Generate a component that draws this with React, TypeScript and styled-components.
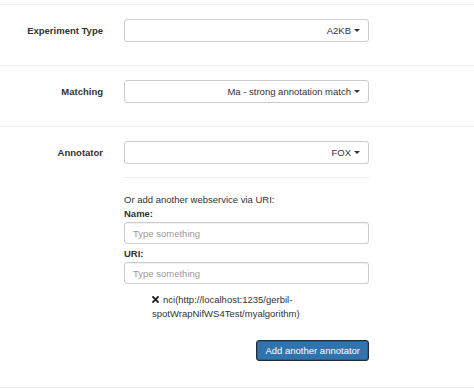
import styled, { createGlobalStyle } from 'styled-components';

const SANS = `"Liberation Sans", Arial, "Helvetica Neue", Helvetica, sans-serif`;

const GlobalStyle = createGlobalStyle`
  html, body {
    margin: 0;
    padding: 0;
    background: #fff;
  }
  body {
    font-family: ${SANS};
    font-size: 9.5px;
    line-height: 14px;
    color: #333;
  }
`;

const Page = styled.div`
  padding-top: 4px;
`;

const Section = styled.div<{ $last?: boolean }>`
  border-top: 1px solid #ededed;
  border-bottom: ${(p) => (p.$last ? '1px solid #ededed' : 'none')};
  padding: 14px 0 ${(p) => (p.$last ? 26 : 23)}px;
`;

const Row = styled.div`
  display: grid;
  grid-template-columns: 103px 245px;
  column-gap: 21px;
  align-items: start;
`;

const Label = styled.label`
  height: 23px;
  display: flex;
  align-items: center;
  justify-content: flex-end;
  font-weight: bold;
  color: #333;
`;

const Column = styled.div`
  display: flex;
  flex-direction: column;
`;

const Dropdown = styled.button`
  height: 23px;
  width: 245px;
  box-sizing: border-box;
  display: flex;
  align-items: center;
  justify-content: flex-end;
  padding: 0 8px;
  background: #fff;
  border: 1px solid #ccc;
  border-radius: 3px;
  font-family: ${SANS};
  font-size: 9.5px;
  color: #333;
`;

const Caret = styled.span`
  display: inline-block;
  width: 0;
  height: 0;
  margin-left: 3px;
  border-top: 3px solid #333;
  border-left: 3px solid transparent;
  border-right: 3px solid transparent;
`;

const Divider = styled.hr`
  border: 0;
  border-top: 1px solid #eee;
  margin: 13px 0 15px;
  height: 0;
`;

const Hint = styled.div`
  color: #333;
`;

const FieldLabel = styled.div`
  font-weight: bold;
`;

const TextInput = styled.input<{ $gap?: number }>`
  height: 22px;
  width: 245px;
  box-sizing: border-box;
  margin: 1px 0 ${(p) => p.$gap ?? 0}px;
  padding: 0 8px;
  border: 1px solid #ccc;
  border-radius: 3px;
  box-shadow: inset 0 1px 1px rgba(0, 0, 0, 0.06);
  font-family: ${SANS};
  font-size: 9.5px;
  color: #555;
  &::placeholder {
    color: #999;
  }
`;

const ServiceList = styled.ul`
  list-style: none;
  margin: 9px 0 0;
  padding: 0 0 0 28px;
`;

const ServiceItem = styled.li`
  color: #333;
`;

const RemoveIcon = styled.svg`
  width: 7px;
  height: 7px;
  margin-right: 4px;
  vertical-align: 0px;
`;

const Actions = styled.div`
  display: flex;
  justify-content: flex-end;
  margin-top: 19px;
`;

const PrimaryButton = styled.button`
  height: 21px;
  box-sizing: border-box;
  padding: 0 8px;
  background: #3174ad;
  border: 1px solid #1f2b38;
  box-shadow: inset 0 0 0 1px #285f91;
  border-radius: 3px;
  color: #fff;
  font-family: ${SANS};
  font-size: 9.5px;
`;

const Remove = () => (
  <RemoveIcon viewBox="0 0 7 7">
    <path d="M1 1 L6 6 M6 1 L1 6" stroke="#222" strokeWidth="1.8" strokeLinecap="square" />
  </RemoveIcon>
);

const App = () => {
  return (
    <>
      <GlobalStyle />
      <Page>
        <Section>
          <Row>
            <Label>Experiment Type</Label>
            <Dropdown>
              A2KB <Caret />
            </Dropdown>
          </Row>
        </Section>
        <Section>
          <Row>
            <Label>Matching</Label>
            <Dropdown>
              Ma - strong annotation match <Caret />
            </Dropdown>
          </Row>
        </Section>
        <Section $last>
          <Row>
            <Label>Annotator</Label>
            <Column>
              <Dropdown>
                FOX <Caret />
              </Dropdown>
              <Divider />
              <Hint>Or add another webservice via URI:</Hint>
              <FieldLabel>Name:</FieldLabel>
              <TextInput placeholder="Type something" $gap={3} />
              <FieldLabel>URI:</FieldLabel>
              <TextInput placeholder="Type something" />
              <ServiceList>
                <ServiceItem>
                  <Remove />
                  nci(http://localhost:1235/gerbil-spotWrapNifWS4Test/myalgorithm)
                </ServiceItem>
              </ServiceList>
              <Actions>
                <PrimaryButton>Add another annotator</PrimaryButton>
              </Actions>
            </Column>
          </Row>
        </Section>
      </Page>
    </>
  );
};

export default App;
